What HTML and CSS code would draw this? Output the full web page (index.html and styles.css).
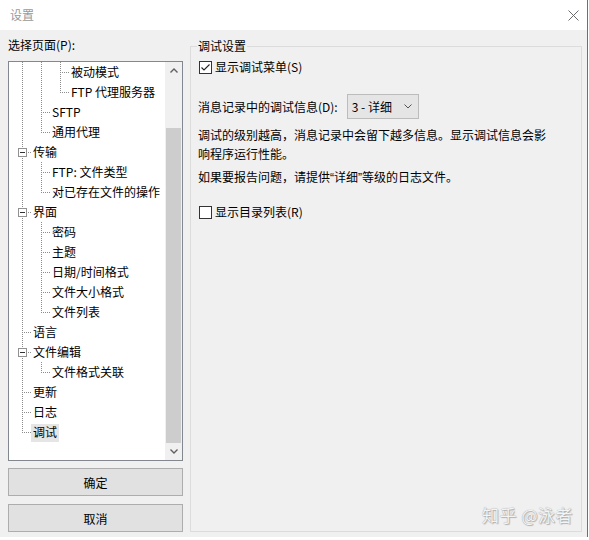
FILE: index.html
```html
<!DOCTYPE html>
<html lang="zh-CN">
<head>
	<meta charset="UTF-8">
	<title>设置</title>
	<link rel="stylesheet" href="styles.css">
</head>
<body>
<div class="window">
	<div class="titlebar">
		<span class="title">设置</span>
		<svg class="close" viewBox="0 0 11 11"><path d="M0.5 0.5L10.5 10.5M10.5 0.5L0.5 10.5" stroke="#6b6b6b" stroke-width="1" fill="none"/></svg>
	</div>
	<div class="content">
		<div class="sidebar">
			<div class="pagesLabel">选择页面(P):</div>
			<div class="treeBox">
				<ul class="tree">
					<li class="node"><span class="guide v"></span><span class="guide v"></span><span class="guide t"></span><span class="label">被动模式</span></li>
					<li class="node"><span class="guide v"></span><span class="guide v"></span><span class="guide l"></span><span class="label">FTP 代理服务器</span></li>
					<li class="node"><span class="guide v"></span><span class="guide t"></span><span class="label">SFTP</span></li>
					<li class="node"><span class="guide v"></span><span class="guide l"></span><span class="label">通用代理</span></li>
					<li class="node"><span class="guide t"><i class="expander"></i></span><span class="label">传输</span></li>
					<li class="node"><span class="guide v"></span><span class="guide t"></span><span class="label">FTP: 文件类型</span></li>
					<li class="node"><span class="guide v"></span><span class="guide l"></span><span class="label">对已存在文件的操作</span></li>
					<li class="node"><span class="guide t"><i class="expander"></i></span><span class="label">界面</span></li>
					<li class="node"><span class="guide v"></span><span class="guide t"></span><span class="label">密码</span></li>
					<li class="node"><span class="guide v"></span><span class="guide t"></span><span class="label">主题</span></li>
					<li class="node"><span class="guide v"></span><span class="guide t"></span><span class="label">日期/时间格式</span></li>
					<li class="node"><span class="guide v"></span><span class="guide t"></span><span class="label">文件大小格式</span></li>
					<li class="node"><span class="guide v"></span><span class="guide l"></span><span class="label">文件列表</span></li>
					<li class="node"><span class="guide t"></span><span class="label">语言</span></li>
					<li class="node"><span class="guide t"><i class="expander"></i></span><span class="label">文件编辑</span></li>
					<li class="node"><span class="guide v"></span><span class="guide l"></span><span class="label">文件格式关联</span></li>
					<li class="node"><span class="guide t"></span><span class="label">更新</span></li>
					<li class="node"><span class="guide t"></span><span class="label">日志</span></li>
					<li class="node"><span class="guide l"></span><span class="label selected">调试</span></li>
				</ul>
				<div class="scrollbar">
					<div class="sbBtn"><svg width="8" height="5" viewBox="0 0 8 5"><path d="M0.5 4.5L4 1L7.5 4.5" stroke="#606060" stroke-width="1.4" fill="none"/></svg></div>
					<div class="sbThumb"></div>
					<div class="sbBtn"><svg width="8" height="5" viewBox="0 0 8 5"><path d="M0.5 0.5L4 4L7.5 0.5" stroke="#606060" stroke-width="1.4" fill="none"/></svg></div>
				</div>
			</div>
			<button class="btn">确定</button>
			<button class="btn">取消</button>
		</div>

		<fieldset class="group">
			<legend>调试设置</legend>
			<label class="check">
				<span class="box"><svg width="11" height="11" viewBox="0 0 11 11"><path d="M1.5 5.5L4 8L9.5 2.5" stroke="#222" stroke-width="1.1" fill="none"/></svg></span>
				<span>显示调试菜单(S)</span>
			</label>
			<div class="levelRow">
				<span>消息记录中的调试信息(D):</span>
				<div class="combo">
					<span>3 - 详细</span>
					<svg width="8" height="5" viewBox="0 0 8 5"><path d="M0.5 0.5L4 4L7.5 0.5" stroke="#555" stroke-width="1" fill="none"/></svg>
				</div>
			</div>
			<p class="note">调试的级别越高，消息记录中会留下越多信息。显示调试信息会影响程序运行性能。</p>
			<p class="note second">如果要报告问题，请提供<span class="quote">“</span>详细<span class="quote">”</span>等级的日志文件。</p>
			<label class="check last">
				<span class="box"></span>
				<span>显示目录列表(R)</span>
			</label>
		</fieldset>
	</div>
	<div class="watermark">知乎 @泳者</div>
</div>
</body>
</html>
```

FILE: styles.css
```css
* {
  box-sizing: border-box;
}
html,
body {
  margin: 0;
}
body {
  width: 589px;
  height: 540px;
  overflow: hidden;
  background: #fff;
  font-family: "Noto Sans CJK SC", "Noto Sans", sans-serif;
  font-size: 12px;
  color: #000;
}

/* 窗口外框 */
.window {
  position: relative;
  width: 588px;
  height: 537px;
  background: #f0f0f0;
  border-right: 1px solid #6f6f6f;
  display: flex;
  flex-direction: column;
}
.titlebar {
  flex: none;
  height: 30px;
  background: #fff;
  display: flex;
  align-items: center;
  justify-content: space-between;
  padding: 0 8px 0 10px;
}
.title {
  color: #999;
  line-height: 16px;
}
.close {
  width: 11px;
  height: 11px;
}
.content {
  flex: 1;
  display: flex;
  align-items: flex-start;
  gap: 7px;
  padding-left: 8px;
}

/* 左侧页面树 */
.sidebar {
  width: 175px;
  display: flex;
  flex-direction: column;
}
.pagesLabel {
  margin-top: 7px;
  line-height: 16px;
}
.treeBox {
  margin-top: 8px;
  height: 400px;
  border: 1px solid #828790;
  background: #fff;
  display: flex;
}
.tree {
  flex: 1;
  list-style: none;
  margin: 0;
  padding: 0 0 0 3px;
  overflow: hidden;
}
.node {
  display: flex;
  height: 20px;
}
.guide {
  flex: none;
  width: 19px;
  height: 20px;
  background-repeat: no-repeat;
}
.guide.v {
  background-image: repeating-linear-gradient(to bottom, #8c8c8c 0 1px, transparent 1px 2px);
  background-position: 10px 0;
  background-size: 1px 20px;
}
.guide.t,
.guide.l {
  background-image:
    repeating-linear-gradient(to bottom, #8c8c8c 0 1px, transparent 1px 2px),
    repeating-linear-gradient(to right, #8c8c8c 0 1px, transparent 1px 2px);
  background-position: 10px 0, 10px 10px;
  background-size: 1px 20px, 9px 1px;
}
.guide.l {
  background-size: 1px 11px, 9px 1px;
}
.expander {
  display: block;
  width: 9px;
  height: 9px;
  margin: 6px 0 0 6px;
  border: 1px solid #919191;
  background: linear-gradient(#333, #333) center / 5px 1px no-repeat, #fff;
}
.label {
  margin-top: 2px;
  padding: 0 2px;
  line-height: 16px;
  white-space: nowrap;
}
.label.selected {
  background: #e5e5e5;
}
.scrollbar {
  flex: none;
  width: 17px;
  background: #f0f0f0;
  display: flex;
  flex-direction: column;
}
.sbBtn {
  height: 17px;
  display: flex;
  align-items: center;
  justify-content: center;
}
.sbThumb {
  flex: 1;
  margin: 49px 1px 0;
  background: #cdcdcd;
}
.btn {
  height: 28px;
  margin-top: 7px;
  padding: 0;
  border: 1px solid #adadad;
  background: #e1e1e1;
  font: inherit;
  color: #000;
}
.btn + .btn {
  margin-top: 8px;
}

/* 右侧调试设置 */
.group {
  margin: 8px 0 0;
  width: 392px;
  height: 494px;
  padding: 0 7px 0 6px;
  border: 1px solid #dcdcdc;
  min-width: 0;
}
.group legend {
  padding: 0 1px;
  line-height: 16px;
}
.check {
  display: flex;
  align-items: center;
  gap: 3px;
  margin-top: 5px;
  line-height: 16px;
}
.check.last {
  margin-top: 16px;
}
.box {
  width: 13px;
  height: 13px;
  margin-left: 2px;
  border: 1px solid #333;
  background: #fff;
  display: flex;
  align-items: center;
  justify-content: center;
}
.levelRow {
  display: flex;
  align-items: center;
  margin-top: 19px;
  padding-left: 1px;
}
.combo {
  width: 72px;
  height: 25px;
  margin-left: 9px;
  padding: 0 6px 0 4px;
  border: 1px solid #bcbcbc;
  background: #e5e5e5;
  display: flex;
  align-items: center;
  justify-content: space-between;
}
.note {
  margin: 6px 0 0;
  padding-left: 1px;
  width: 356px;
  line-height: 19px;
}
.note.second {
  margin-top: 4px;
}
.quote {
  font-family: "Liberation Sans", sans-serif;
}

.watermark {
  position: absolute;
  right: 14px;
  bottom: 12px;
  font-size: 17px;
  line-height: 20px;
  color: #f4f4f4;
  text-shadow: 0 0 1px #8a8a8a, 1px 1px 1px rgba(0, 0, 0, 0.25);
  letter-spacing: 0.5px;
}
```
